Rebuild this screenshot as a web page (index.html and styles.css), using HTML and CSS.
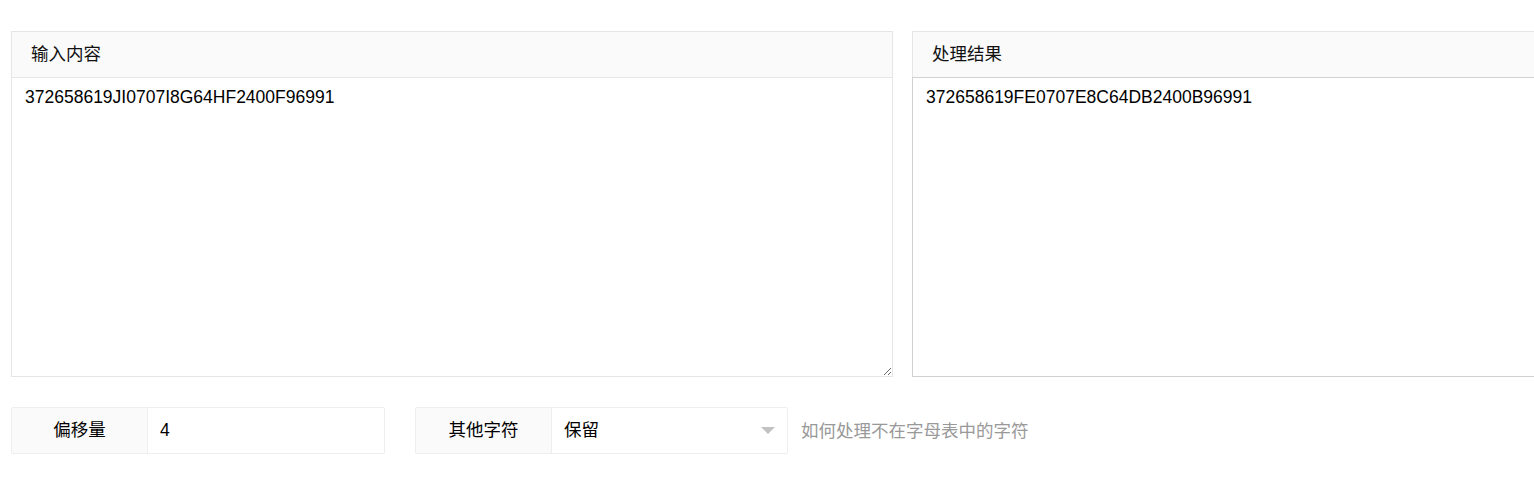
FILE: index.html
```html
<!DOCTYPE html>
<html lang="zh-CN">
<head>
    <meta charset="UTF-8">
    <meta name="viewport" content="width=device-width, initial-scale=1.0">
    <title>凯撒密码</title>
    <link rel="stylesheet" href="styles.css">
</head>
<body>
    <div class="main">
        <div class="panels">
            <div class="panel">
                <div class="panel-header">输入内容</div>
                <textarea class="panel-text" id="input">372658619JI0707I8G64HF2400F96991</textarea>
            </div>
            <div class="panel">
                <div class="panel-header">处理结果</div>
                <textarea class="panel-text is-hover" id="output" readonly>372658619FE0707E8C64DB2400B96991</textarea>
            </div>
        </div>
        <div class="options">
            <div class="input-group group-shift">
                <label class="group-label" for="shift">偏移量</label>
                <input class="group-input" type="text" id="shift" value="4">
            </div>
            <div class="input-group group-other">
                <span class="group-label">其他字符</span>
                <div class="select-box">
                    <span class="select-value">保留</span>
                    <i class="select-arrow"></i>
                </div>
            </div>
            <span class="hint">如何处理不在字母表中的字符</span>
        </div>
    </div>
</body>
</html>
```

FILE: styles.css
```css
html, body {
    margin: 0;
    padding: 0;
    overflow: hidden;
    background: #fff;
}
body {
    font-family: "Liberation Sans", "Noto Sans CJK SC", sans-serif;
    font-size: 17.5px;
    color: #111;
}
.main {
    padding: 31px 0 0 11px;
}
.panels {
    display: flex;
    gap: 19px;
    width: 1800px;
}
.panel {
    flex: 0 0 882px;
    display: flex;
    flex-direction: column;
}
.panel-header {
    height: 45px;
    line-height: 45px;
    padding: 0 19px;
    background: #fafafa;
    border: 1px solid #e6e6e6;
    border-bottom: none;
}
.panel-text {
    display: block;
    box-sizing: border-box;
    width: 100%;
    height: 300px;
    margin: 0;
    padding: 7px 13px;
    border: 1px solid #e6e6e6;
    font-family: inherit;
    font-size: 17.5px;
    line-height: 25px;
    color: #000;
    outline: none;
    resize: both;
}
.panel-text.is-hover {
    border-color: #d2d2d2;
}
.options {
    display: flex;
    align-items: center;
    margin-top: 30px;
}
.input-group {
    display: flex;
    box-sizing: border-box;
    height: 47px;
    border: 1px solid #eee;
    border-radius: 2px;
}
.group-shift {
    width: 374px;
}
.group-other {
    width: 373px;
    margin-left: 30px;
}
.group-label {
    box-sizing: border-box;
    flex: 0 0 136px;
    background: #fafafa;
    border-right: 1px solid #eee;
    text-align: center;
    line-height: 45px;
    color: #000;
}
.group-input {
    flex: 1;
    min-width: 0;
    border: none;
    outline: none;
    padding: 0 12px;
    font-family: inherit;
    font-size: 17.5px;
    color: #000;
    background: #fff;
}
.select-box {
    flex: 1;
    position: relative;
    padding: 0 12px;
    line-height: 45px;
    color: #000;
}
.select-arrow {
    position: absolute;
    right: 12px;
    top: 19px;
    width: 0;
    height: 0;
    border-left: 7px solid transparent;
    border-right: 7px solid transparent;
    border-top: 7px solid #c2c2c2;
}
.hint {
    margin-left: 13px;
    margin-top: -2px;
    color: #999;
}
```
